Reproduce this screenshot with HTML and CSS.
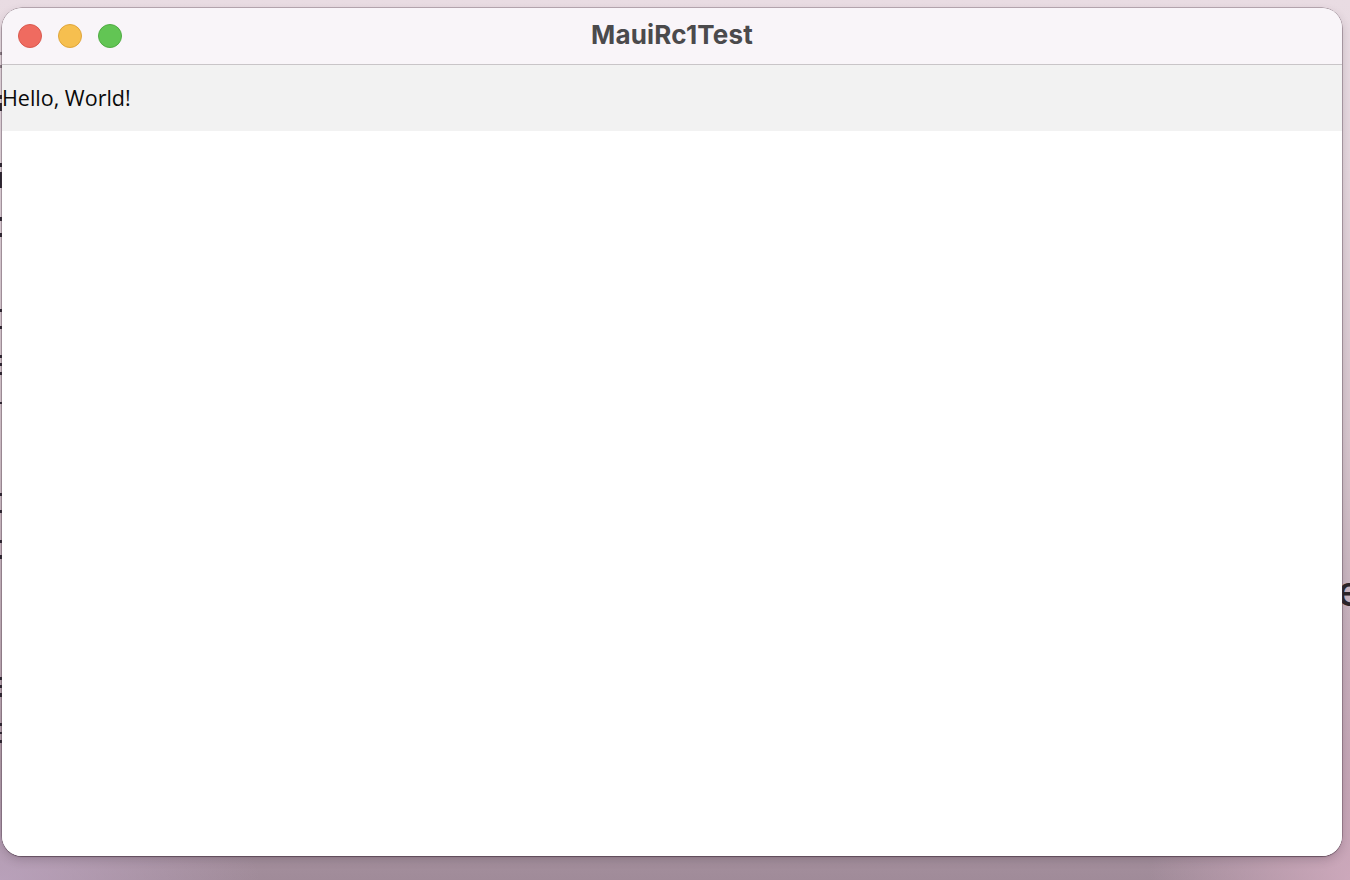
FILE: index.html
```html
<!DOCTYPE html>
<html lang="en">
<head>
<meta charset="utf-8">
<title>MauiRc1Test</title>
<link rel="stylesheet" href="styles.css">
</head>
<body>
<svg class="behind-marks" width="1350" height="880" viewBox="0 0 1350 880" aria-hidden="true">
  <path class="mark-soft" d="M0 52h2v3H0zM0 65h2v3H0z"/>
  <path class="mark" d="M0 95h2v4H0zM0 103h2v8H0zM0 163h2v4H0zM0 172h2v16H0zM0 217h2v4H0zM0 233h2v4H0zM0 309h2v3H0zM0 326h2v3H0zM0 355h2v3H0zM0 363h2v3H0zM0 372h2v3H0zM0 402h2v2H0zM0 493h2v3H0zM0 510h2v3H0zM0 540h2v3H0zM0 555h2v4H0zM0 677h2v3H0zM0 685h2v3H0zM0 693h2v4H0zM0 723h2v3H0zM0 732h2v2H0zM0 740h2v3H0z"/>
</svg>
<span class="behind-glyph">e</span>
<main class="window">
  <header class="titlebar">
    <div class="lights">
      <span class="light light-close"></span>
      <span class="light light-min"></span>
      <span class="light light-max"></span>
    </div>
    <h1 class="title">MauiRc1Test</h1>
  </header>
  <div class="content-bar">
    <p class="hello">Hello, World!</p>
  </div>
  <div class="content-body"></div>
</main>
</body>
</html>
```
FILE: styles.css
```css
* { box-sizing: border-box; }

html, body {
  margin: 0;
  height: 880px;
  overflow: hidden;
}

body {
  position: relative;
  padding: 8px 8px 24px 2px;
  background:
    radial-gradient(260px 120px at 0% 100%, rgba(195,170,200,0.7), rgba(195,170,200,0)),
    radial-gradient(200px 300px at 100% 100%, rgba(215,175,195,0.8), rgba(215,175,195,0)),
    linear-gradient(180deg, #e9dce3 0%, #e4d6dd 20%, #d6c5cd 50%, #bda8b4 80%, #a08b99 100%);
  font-family: "Open Sans", "Liberation Sans", sans-serif;
}

.behind-marks {
  position: absolute;
  left: 0;
  top: 0;
}

.mark { fill: #2b2630; }
.mark-soft { fill: #8d8088; }

.behind-glyph {
  position: absolute;
  left: 1337px;
  top: 565px;
  font: 600 42px/50px "Open Sans", sans-serif;
  color: #2a2428;
}

.window {
  position: relative;
  display: flex;
  flex-direction: column;
  width: 1340px;
  height: 848px;
  border-radius: 20px;
  overflow: hidden;
  background: #ffffff;
  box-shadow:
    0 0 0 0.5px rgba(70, 50, 65, 0.6),
    0 1px 1px rgba(60, 40, 55, 0.45),
    0 4px 10px rgba(60, 40, 55, 0.22);
}

.titlebar {
  position: relative;
  flex: none;
  display: flex;
  align-items: center;
  justify-content: center;
  height: 57px;
  background: #f9f5f9;
  border-bottom: 1px solid #c9c5c8;
}

.lights {
  position: absolute;
  left: 16px;
  top: 16px;
  display: flex;
  gap: 16px;
}

.light {
  width: 24px;
  height: 24px;
  border-radius: 50%;
  border: 1px solid;
}

.light-close { background: #ef6b60; border-color: #d9594f; }
.light-min { background: #f6bf4f; border-color: #dfa53b; }
.light-max { background: #62c554; border-color: #50ab43; }

.title {
  margin: 0;
  font: 700 26px/30px Inter, "Liberation Sans", sans-serif;
  letter-spacing: 0.2px;
  color: #4b4a4c;
  position: relative;
  top: -1px;
}

.content-bar {
  flex: none;
  display: flex;
  align-items: center;
  height: 66px;
  padding-left: 0;
  background: #f2f2f2;
}

.hello {
  margin: 0;
  font-size: 21.5px;
  line-height: 32px;
  color: #0a0a0a;
}

.content-body {
  flex: 1;
  background: #ffffff;
}
```
